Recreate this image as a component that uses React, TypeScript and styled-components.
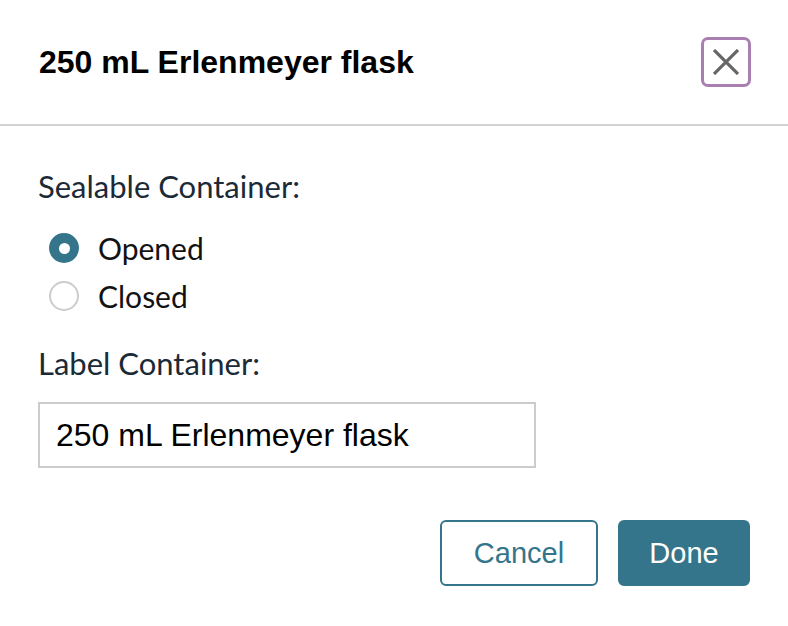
import React, { useState } from "react";
import styled, { createGlobalStyle } from "styled-components";

const GlobalStyle = createGlobalStyle`
  html, body { margin: 0; padding: 0; background: #ffffff; }
  * { box-sizing: border-box; }
`;

const Dialog = styled.div`
  width: 788px;
  height: 626px;
  background: #ffffff;
  display: flex;
  flex-direction: column;
`;

const Header = styled.header`
  height: 126px;
  display: flex;
  align-items: center;
  justify-content: space-between;
  padding: 0 37px 0 39px;
  border-bottom: 2px solid #d3d3d3;
`;

const Title = styled.h1`
  margin: 0;
  font-family: "Liberation Sans", Arial, sans-serif;
  font-weight: 700;
  font-size: 32px;
  color: #000000;
`;

const CloseButton = styled.button`
  width: 50px;
  height: 50px;
  border: 3px solid #a87fb0;
  border-radius: 7px;
  background: #ffffff;
  display: flex;
  align-items: center;
  justify-content: center;
  padding: 0;
  cursor: pointer;
`;

const Body = styled.div`
  display: flex;
  flex-direction: column;
  padding: 36px 38px 0 38px;
`;

const FieldLabel = styled.div<{ $gap: number }>`
  font-family: Lato, "Noto Sans", sans-serif;
  font-size: 31px;
  line-height: 48px;
  color: #1b2a36;
  margin-bottom: ${(p) => p.$gap}px;
`;

const RadioGroup = styled.div`
  display: flex;
  flex-direction: column;
  margin-bottom: 19px;
`;

const RadioRow = styled.label`
  display: flex;
  align-items: center;
  gap: 19px;
  height: 48px;
  padding-left: 11px;
  font-family: Lato, "Noto Sans", sans-serif;
  font-size: 30px;
  color: #121212;
  cursor: pointer;
`;

const RadioCircle = styled.span<{ $checked: boolean }>`
  width: 30px;
  height: 30px;
  border-radius: 50%;
  flex: none;
  background: ${(p) => (p.$checked ? "#34758b" : "#ffffff")};
  border: ${(p) => (p.$checked ? "none" : "2px solid #cccccc")};
  display: flex;
  align-items: center;
  justify-content: center;
  &::after {
    content: "";
    display: ${(p) => (p.$checked ? "block" : "none")};
    width: 11px;
    height: 11px;
    border-radius: 50%;
    background: #ffffff;
  }
`;

const TextInput = styled.input`
  width: 498px;
  height: 66px;
  border: 2px solid #cccccc;
  border-radius: 0;
  padding: 0 16px;
  font-family: "Liberation Sans", Arial, sans-serif;
  font-size: 32px;
  color: #000000;
  outline: none;
`;

const Footer = styled.div`
  display: flex;
  justify-content: flex-end;
  gap: 20px;
  margin-top: 52px;
`;

const Button = styled.button<{ $primary?: boolean; $width: number }>`
  width: ${(p) => p.$width}px;
  height: 66px;
  border-radius: 6px;
  border: 2px solid #34758b;
  background: ${(p) => (p.$primary ? "#34758b" : "#ffffff")};
  color: ${(p) => (p.$primary ? "#ffffff" : "#34758b")};
  font-family: "Liberation Sans", Arial, sans-serif;
  font-size: 29px;
  cursor: pointer;
`;

export default function App() {
  const [sealed, setSealed] = useState<"opened" | "closed">("opened");
  const [label, setLabel] = useState("250 mL Erlenmeyer flask");
  return (
    <>
      <GlobalStyle />
      <Dialog>
        <Header>
          <Title>250 mL Erlenmeyer flask</Title>
          <CloseButton aria-label="Close">
            <svg width="26" height="26" viewBox="0 0 26 26">
              <path d="M1 1 L25 25 M25 1 L1 25" stroke="#666666" strokeWidth="3.2" />
            </svg>
          </CloseButton>
        </Header>
        <Body>
          <FieldLabel $gap={14}>Sealable Container:</FieldLabel>
          <RadioGroup>
            <RadioRow onClick={() => setSealed("opened")}>
              <RadioCircle $checked={sealed === "opened"} />
              Opened
            </RadioRow>
            <RadioRow onClick={() => setSealed("closed")}>
              <RadioCircle $checked={sealed === "closed"} />
              Closed
            </RadioRow>
          </RadioGroup>
          <FieldLabel $gap={15}>Label Container:</FieldLabel>
          <TextInput value={label} onChange={(e) => setLabel(e.target.value)} />
          <Footer>
            <Button $width={158}>Cancel</Button>
            <Button $primary $width={132}>Done</Button>
          </Footer>
        </Body>
      </Dialog>
    </>
  );
}
